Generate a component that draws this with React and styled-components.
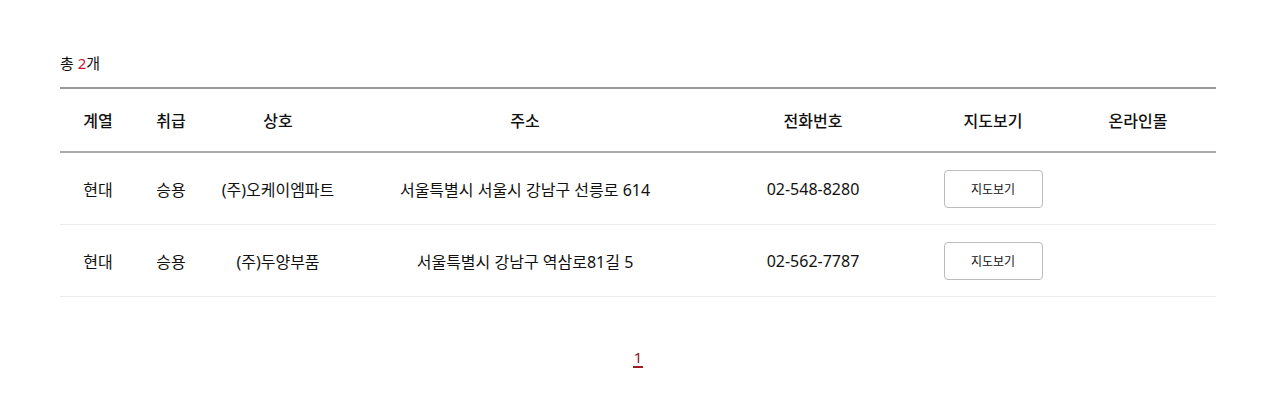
import React from 'react';
import styled, { createGlobalStyle } from 'styled-components';

const GlobalStyle = createGlobalStyle`
  body {
    margin: 0;
    background: #fff;
    font-family: "Noto Sans", "Noto Sans CJK KR", sans-serif;
    color: #111;
  }
`;

const COLS = '76px 70px 144px 350px 226px 134px 156px';

const Page = styled.div`
  padding: 49px 64px 0 60px;
`;

const Total = styled.div`
  font-size: 15px;
  height: 28px;
  line-height: 28px;
  margin-bottom: 10px;

  em {
    font-style: normal;
    color: #c8102e;
  }
`;

const Table = styled.div`
  border-top: 2px solid #999;
`;

const Row = styled.div`
  display: grid;
  grid-template-columns: ${COLS};
  align-items: center;
  height: ${({ $head }) => ($head ? '62px' : '71px')};
  border-bottom: ${({ $head }) => ($head ? '2px solid #aaa' : '1px solid #ebebeb')};
`;

const Cell = styled.div`
  text-align: center;
  font-size: 16px;
  font-weight: ${({ $head }) => ($head ? 500 : 400)};
  white-space: nowrap;
`;

const MapButton = styled.button`
  width: 99px;
  height: 38px;
  background: #fff;
  border: 1px solid #bbb;
  border-radius: 4px;
  font-family: inherit;
  font-size: 12px;
  color: #111;
  cursor: pointer;
`;

const Pager = styled.div`
  display: flex;
  justify-content: center;
  margin-top: 52px;
`;

const PageLink = styled.a`
  font-size: 15px;
  line-height: 16px;
  color: #8e1424;
  padding: 0 1px 1px;
  border-bottom: 2px solid #a01a22;
  cursor: pointer;
`;

const headers = ['계열', '취급', '상호', '주소', '전화번호', '지도보기', '온라인몰'];

const rows = [
  ['현대', '승용', '(주)오케이엠파트', '서울특별시 서울시 강남구 선릉로 614', '02-548-8280'],
  ['현대', '승용', '(주)두양부품', '서울특별시 강남구 역삼로81길 5', '02-562-7787'],
];

const App = () => (
  <Page>
    <GlobalStyle />
    <Total>
      총 <em>2</em>개
    </Total>
    <Table>
      <Row $head>
        {headers.map((h) => (
          <Cell $head key={h}>
            {h}
          </Cell>
        ))}
      </Row>
      {rows.map((r) => (
        <Row key={r[2]}>
          {r.map((c, i) => (
            <Cell key={i}>{c}</Cell>
          ))}
          <Cell>
            <MapButton>지도보기</MapButton>
          </Cell>
          <Cell />
        </Row>
      ))}
    </Table>
    <Pager>
      <PageLink>1</PageLink>
    </Pager>
  </Page>
);

export default App;
